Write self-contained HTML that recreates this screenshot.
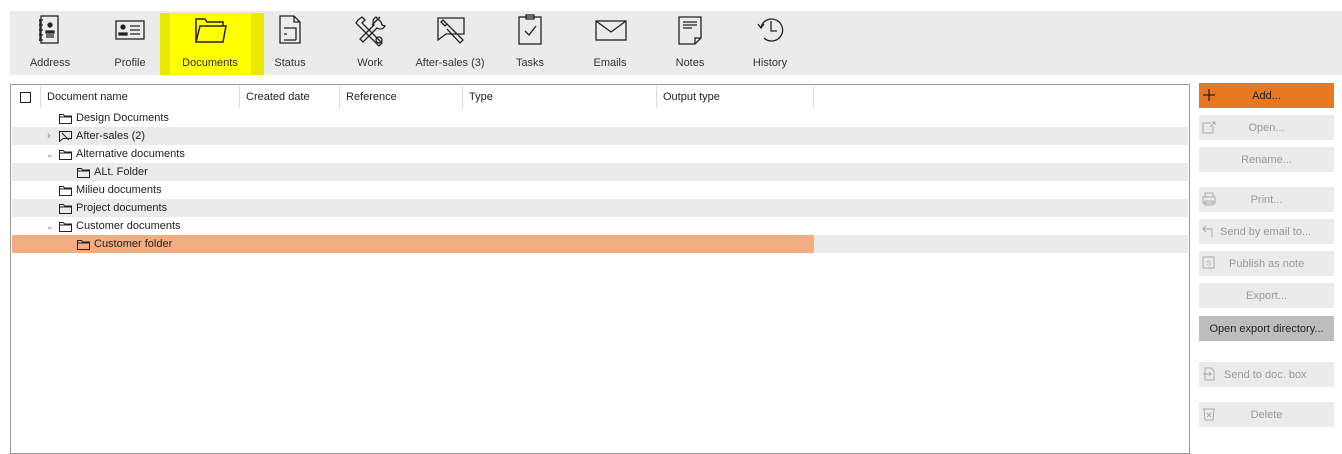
<!DOCTYPE html>
<html><head><style>
*{margin:0;padding:0;box-sizing:border-box}
body{width:1342px;height:441px;background:#fff;font-family:"Liberation Sans",sans-serif;font-size:11px;color:#222;position:relative;overflow:hidden}
.tb{position:absolute;left:10px;top:11px;width:1332px;height:64px;background:#ebebeb}
.it{position:absolute;top:11px;width:80px;height:64px;text-align:center}
.it svg{position:absolute;left:24px;top:3px}
.it span{position:absolute;left:0;right:0;top:46px;font-size:11px;color:#333}
.hl{position:absolute;left:160px;top:13px;width:104px;height:62px;background:#e8e800}
.hl2{position:absolute;left:170px;top:13px;width:81px;height:62px;background:#ffff00}
.tab{position:absolute;left:10px;top:84px;width:1180px;height:370px;border:1px solid #999}
.hd{position:absolute;top:86px;height:22px;line-height:23px;padding-left:6px;border-right:1px solid #ddd}
.row{position:absolute;left:12px;width:1176px;height:18px;line-height:19px}
.g{background:#ebebeb}
.lbl{position:absolute;top:0}
.fi{position:absolute;top:4px}
.btn{position:absolute;left:1199px;width:135px;height:25px;background:#ebebeb;color:#999;text-align:center;line-height:26px}
.btn svg{position:absolute;left:3px;top:5px}
</style></head><body>
<div class="tb"></div>
<div class="hl"></div><div class="hl2"></div>
<svg width="0" height="0" style="position:absolute"><defs>
<symbol id="fold" viewBox="0 0 13 11"><path d="M0.5 1.5h4l1 1.5h7v7.5h-12z M0.5 4h12" fill="none" stroke="#222"/></symbol>
</defs></svg>

<div class="it" style="left:10px"><svg width="32" height="32" viewBox="0 0 32 32" fill="none" stroke="#222" stroke-width="1.3"><rect x="7" y="2" width="17" height="27"/><path d="M5 6h4M5 11h4M5 16h4M5 21h4M5 26h4M6 5v22"/><circle cx="16" cy="11" r="2" fill="#222"/><path d="M12 17h8v2h-8zM12 21h8M12 23h8" fill="#222"/></svg><span>Address</span></div>
<div class="it" style="left:90px"><svg width="32" height="32" viewBox="0 0 32 32" fill="none" stroke="#222" stroke-width="1.3"><rect x="2" y="7" width="28" height="18"/><circle cx="9" cy="13" r="2" fill="#222"/><path d="M5 19h8v2H5z" fill="#222"/><path d="M16 12h10M16 16h10M16 20h10"/></svg><span>Profile</span></div>
<div class="it" style="left:170px"><svg width="34" height="32" viewBox="0 0 34 32" fill="none" stroke="#222" stroke-width="1.5"><path d="M2 28V5h9l2 3h16v4M2 28l4-16h26l-3 16z"/></svg><span>Documents</span></div>
<div class="it" style="left:250px"><svg width="32" height="32" viewBox="0 0 32 32" fill="none" stroke="#222" stroke-width="1.3"><path d="M6 2h14l6 6v21H6zM20 2v6h6M10 14h12v12M10 20h3M10 26h12"/></svg><span>Status</span></div>
<div class="it" style="left:330px"><svg width="34" height="34" viewBox="0 0 34 34" fill="none" stroke="#222" stroke-width="1.3"><path d="M4 6l4-3 3 3-3 3 20 20-3 3L5 12 2 9zM26 3l-8 8M22 3c-3 2-4 5-2 8l-14 14 3 3 14-14c3 2 6 1 8-2l-3-1-1-3-2-2z"/><circle cx="25" cy="26" r="3"/></svg><span>Work</span></div>
<div class="it" style="left:410px"><svg width="34" height="32" viewBox="0 0 34 32" fill="none" stroke="#222" stroke-width="1.3"><path d="M4 4h26v16H12l-8 6z"/><path d="M9 6l4 4-2 2-4-4zM13 10l13 13 3 3-3 3-13-14"/></svg><span style="left:-20px;right:-20px">After-sales (3)</span></div>
<div class="it" style="left:490px"><svg width="32" height="32" viewBox="0 0 32 32" fill="none" stroke="#222" stroke-width="1.3"><rect x="5" y="3" width="22" height="27"/><rect x="12" y="1" width="8" height="4"/><path d="M11 17l4 4 7-9"/></svg><span>Tasks</span></div>
<div class="it" style="left:570px"><svg width="34" height="32" viewBox="0 0 34 32" fill="none" stroke="#222" stroke-width="1.3"><rect x="2" y="7" width="30" height="19"/><path d="M2 7l15 11 15-11"/></svg><span>Emails</span></div>
<div class="it" style="left:650px"><svg width="32" height="32" viewBox="0 0 32 32" fill="none" stroke="#222" stroke-width="1.3"><path d="M5 3h22v21l-6 6H5zM27 24h-6v6M9 8h14M9 11h14M9 14h9"/></svg><span>Notes</span></div>
<div class="it" style="left:730px"><svg width="34" height="32" viewBox="0 0 34 32" fill="none" stroke="#222" stroke-width="1.3"><path d="M7 13a11 11 0 1 1 3 11"/><path d="M4 10l3 4 3-4M17 7v10h6"/></svg><span>History</span></div>

<div class="tab"></div>
<div style="position:absolute;left:20px;top:92px;width:11px;height:11px;border:1px solid #222"></div>
<div class="hd" style="left:40px;width:200px;border-left:1px solid #ddd">Document name</div>
<div class="hd" style="left:240px;width:100px">Created date</div>
<div class="hd" style="left:340px;width:123px">Reference</div>
<div class="hd" style="left:463px;width:194px">Type</div>
<div class="hd" style="left:657px;width:157px">Output type</div>

<div class="row" style="top:109px"><svg class="fi" style="left:47px" width="13" height="11"><use href="#fold"/></svg><span class="lbl" style="left:64px">Design Documents</span></div>
<div class="row g" style="top:127px"><span class="lbl" style="left:35px;color:#777">›</span><svg class="fi" style="left:47px" width="13" height="11" viewBox="0 0 13 11" fill="none" stroke="#222"><path d="M0.5 0.5h12v7H4l-3.5 3z M3 2l7 7"/></svg><span class="lbl" style="left:64px">After-sales (2)</span></div>
<div class="row" style="top:145px"><span class="lbl" style="left:34px;color:#777;font-size:9px">⌄</span><svg class="fi" style="left:47px" width="13" height="11"><use href="#fold"/></svg><span class="lbl" style="left:64px">Alternative documents</span></div>
<div class="row g" style="top:163px"><svg class="fi" style="left:65px" width="13" height="11"><use href="#fold"/></svg><span class="lbl" style="left:82px">ALt. Folder</span></div>
<div class="row" style="top:181px"><svg class="fi" style="left:47px" width="13" height="11"><use href="#fold"/></svg><span class="lbl" style="left:64px">Milieu documents</span></div>
<div class="row g" style="top:199px"><svg class="fi" style="left:47px" width="13" height="11"><use href="#fold"/></svg><span class="lbl" style="left:64px">Project documents</span></div>
<div class="row" style="top:217px"><span class="lbl" style="left:34px;color:#777;font-size:9px">⌄</span><svg class="fi" style="left:47px" width="13" height="11"><use href="#fold"/></svg><span class="lbl" style="left:64px">Customer documents</span></div>
<div class="row g" style="top:235px"><div style="position:absolute;left:0;top:0;width:802px;height:18px;background:#f2ae80"></div><svg class="fi" style="left:65px" width="13" height="11"><use href="#fold"/></svg><span class="lbl" style="left:82px">Customer folder</span></div>

<div class="btn" style="top:83px;background:#e87722;color:#222"><svg width="14" height="14" viewBox="0 0 14 14" stroke="#222" stroke-width="1.3"><path d="M7 1v12M1 7h12"/></svg>Add...</div>
<div class="btn" style="top:115px"><svg width="14" height="14" viewBox="0 0 14 14" fill="none" stroke="#aaa"><path d="M9 3H1v10h10V6M8 7l5-5M10 2h3v3"/></svg>Open...</div>
<div class="btn" style="top:147px">Rename...</div>
<div class="btn" style="top:187px"><svg width="14" height="14" viewBox="0 0 14 14" fill="none" stroke="#aaa"><path d="M3 5V1h8v4M1 5h12v6H1zM3 9h8v4H3z"/></svg>Print...</div>
<div class="btn" style="top:219px;text-align:left;padding-left:21px"><svg width="14" height="14" viewBox="0 0 14 14" fill="none" stroke="#aaa"><path d="M4 2L1 5l3 3M1 5h9v8"/></svg>Send by email to...</div>
<div class="btn" style="top:251px;text-align:left;padding-left:30px"><svg width="14" height="14" viewBox="0 0 14 14" fill="none" stroke="#aaa"><rect x="1" y="1" width="11" height="11"/><text x="4.5" y="9.5" font-size="7" fill="#aaa" stroke="none">S</text></svg>Publish as note</div>
<div class="btn" style="top:283px">Export...</div>
<div class="btn" style="top:316px;background:#bdbdbd;color:#222">Open export directory...</div>
<div class="btn" style="top:362px;text-align:left;padding-left:25px"><svg width="14" height="14" viewBox="0 0 14 14" fill="none" stroke="#aaa"><path d="M3 1h6l3 3v9H3zM1 7h8M7 5l2 2-2 2"/></svg>Send to doc. box</div>
<div class="btn" style="top:402px"><svg width="14" height="14" viewBox="0 0 14 14" fill="none" stroke="#aaa"><path d="M1 2h12M2 2l1 11h8l1-11M5 6l4 4M9 6l-4 4"/></svg>Delete</div>
</body></html>
